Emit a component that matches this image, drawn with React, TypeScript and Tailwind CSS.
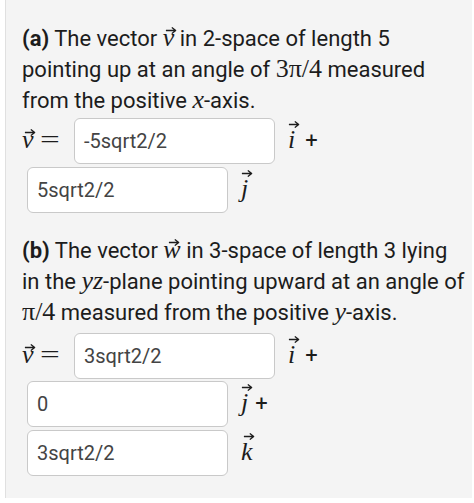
import React from "react";

const Arrow = () => (
  <svg width="11" height="7" viewBox="0 0 11 7" className="block">
    <path d="M0.5 3.5 H9.5 M6.5 0.8 L10 3.5 L6.5 6.2" fill="none" stroke="currentColor" strokeWidth="1.3" strokeLinecap="round" strokeLinejoin="round" />
  </svg>
);

function Vec({ ch, tall = false }: { ch: string; tall?: boolean }) {
  return (
    <span className="relative inline-block leading-none font-['Liberation_Serif',serif] italic text-[26px]">
      {ch}
      <span className={`absolute left-1/2 -translate-x-[30%] ${tall ? "-top-[6px]" : "top-[2px]"}`}>
        <Arrow />
      </span>
    </span>
  );
}

const M = ({ children }: { children: React.ReactNode }) => (
  <span className="font-['Liberation_Serif',serif] italic text-[26px] leading-none">{children}</span>
);
const U = ({ children }: { children: React.ReactNode }) => (
  <span className="font-['Liberation_Serif',serif] text-[26px] leading-none">{children}</span>
);

const Box = ({ v }: { v: string }) => (
  <div className="w-[201px] h-[46px] rounded-[6px] border border-[#c9c9c9] bg-white px-[9px] text-[20px] leading-[44px] text-[#444]">
    {v}
  </div>
);

const VEq = () => (
  <span className="inline-flex w-[52px] items-baseline">
    <Vec ch="v" />
    <span className="ml-[6px] inline-block origin-left scale-x-[1.35] font-['Liberation_Serif',serif] text-[26px] leading-none">
      =
    </span>
  </span>
);

export default function App() {
  return (
    <div className="w-[474px] h-[503px] bg-white font-['Roboto',sans-serif] overflow-hidden">
      <div className="ml-[5px] w-[467px] h-[498px] bg-[#f4f4f4] border-l border-[#e0e0e0] pl-[16px] pt-[23px] text-[#1c1c1c] overflow-hidden">
        <p className="text-[22px] leading-[31px] whitespace-nowrap">
          <b className="font-bold">(a)</b> The vector <Vec ch="v" /> in 2-space of length 5
          <br />
          pointing up at an angle of <U>3π/4</U> measured
          <br />
          from the positive <M>x</M>-axis.
        </p>
        <div className="mt-[2px] flex items-baseline">
          <VEq />
          <Box v="-5sqrt2/2" />
          <span className="ml-[13px]">
            <Vec ch="i" tall />
          </span>
          <span className="ml-[10px] text-[22px]">+</span>
        </div>
        <div className="mt-[3px] ml-[5px] flex items-baseline">
          <Box v="5sqrt2/2" />
          <span className="ml-[13px]">
            <Vec ch="j" tall />
          </span>
        </div>

        <p className="mt-[22px] text-[22px] leading-[31px] whitespace-nowrap">
          <b className="font-bold">(b)</b> The vector <Vec ch="w" /> in 3-space of length 3 lying
          <br />
          in the <M>yz</M>-plane pointing upward at an angle of
          <br />
          <U>π/4</U> measured from the positive <M>y</M>-axis.
        </p>
        <div className="mt-[5px] flex items-baseline">
          <VEq />
          <Box v="3sqrt2/2" />
          <span className="ml-[13px]">
            <Vec ch="i" tall />
          </span>
          <span className="ml-[10px] text-[22px]">+</span>
        </div>
        <div className="mt-[2px] ml-[5px] flex items-baseline">
          <Box v="0" />
          <span className="ml-[13px]">
            <Vec ch="j" tall />
          </span>
          <span className="ml-[7px] text-[22px]">+</span>
        </div>
        <div className="mt-[3px] ml-[5px] flex items-baseline">
          <Box v="3sqrt2/2" />
          <span className="ml-[13px]">
            <Vec ch="k" tall />
          </span>
        </div>
      </div>
    </div>
  );
}
